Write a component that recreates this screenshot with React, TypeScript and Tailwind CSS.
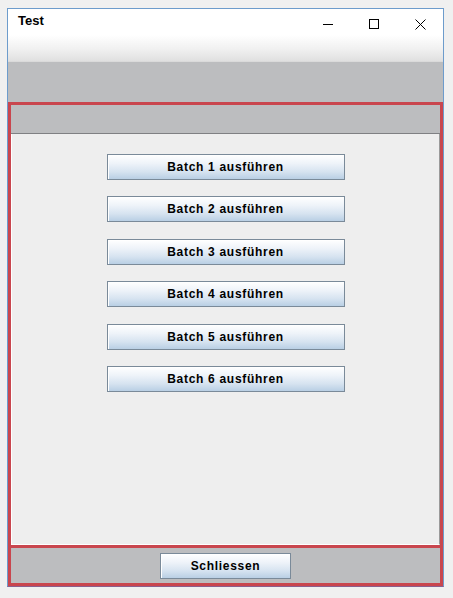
import React from 'react';

const batches = [1, 2, 3, 4, 5, 6];

const btnClass =
  'border border-[#7a8a99] bg-[linear-gradient(to_bottom,#ffffff_0%,#eef3f9_35%,#d6e3f0_70%,#b9cfe4_100%)] text-[12px] font-bold tracking-[0.7px] text-black flex items-center justify-center shadow-[inset_1px_1px_0_#ffffff]';

function CaptionButtons() {
  return (
    <div className="flex h-[30px]">
      {/* minimize */}
      <div className="w-[46px] flex items-center justify-center">
        <svg width="10" height="10" viewBox="0 0 10 10">
          <line x1="0" y1="5.5" x2="10" y2="5.5" stroke="#000" strokeWidth="1" />
        </svg>
      </div>
      {/* maximize */}
      <div className="w-[46px] flex items-center justify-center">
        <svg width="10" height="10" viewBox="0 0 10 10">
          <rect x="0.5" y="0.5" width="9" height="9" fill="none" stroke="#000" strokeWidth="1" />
        </svg>
      </div>
      {/* close */}
      <div className="w-[46px] flex items-center justify-center">
        <svg width="11" height="11" viewBox="0 0 11 11">
          <path d="M0.5 0.5 L10.5 10.5 M10.5 0.5 L0.5 10.5" stroke="#000" strokeWidth="1" />
        </svg>
      </div>
    </div>
  );
}

export default function App() {
  return (
    <div className="w-[453px] h-[598px] bg-[#f0f0f0] pt-[8px] pl-[7px] font-['Liberation_Sans',Arial,sans-serif]">
      {/* Window */}
      <div className="w-[437px] h-[579px] border border-[#6d9ccc] border-b-[#8a5f8e] flex flex-col bg-[#eeeeee]">
        {/* Title bar */}
        <div className="h-[53px] flex justify-between border-b border-[#dadada] bg-[linear-gradient(to_bottom,#ffffff_0%,#ffffff_50%,#f0f0f0_78%,#e0e0e0_100%)]">
          <div className="pl-[10px] pt-[4px] text-[13px] font-bold text-black leading-[16px]">Test</div>
          <CaptionButtons />
        </div>

        {/* Empty toolbar band */}
        <div className="h-[40px] bg-[#bcbdbf]" />

        {/* Red framed panel */}
        <div className="flex-1 flex flex-col border-[3px] border-[#c9464e]">
          <div className="h-[29px] bg-[#bcbdbf] border-b border-[#7f8083]" />

          <div className="flex-1 bg-[#eeeeee] border-l border-b border-white border-r border-r-[#9a9a9a] flex flex-col items-center pt-[20px] gap-[16.4px]">
            {batches.map((n) => (
              <button key={n} className={`w-[238px] h-[26px] ${btnClass}`}>
                Batch {n} ausführen
              </button>
            ))}
          </div>

          {/* Bottom panel */}
          <div className="h-[38px] border-t-[3px] border-[#c9464e] bg-[#bcbdbf] flex items-start justify-center pt-[5px]">
            <button className={`w-[131px] h-[26px] ${btnClass}`}>Schliessen</button>
          </div>
        </div>
      </div>
    </div>
  );
}
